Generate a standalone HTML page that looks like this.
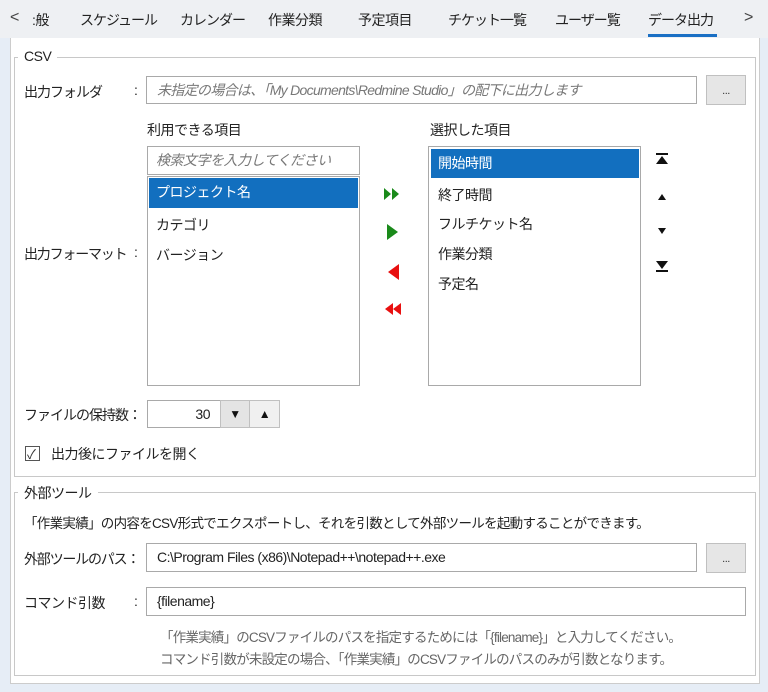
<!DOCTYPE html>
<html><head><meta charset="utf-8"><style>
*{box-sizing:border-box;margin:0;padding:0}
body{width:768px;height:692px;background:#e6edf6;font-family:"Liberation Sans","Noto Sans CJK JP",sans-serif;font-size:14px;color:#222;position:relative;overflow:hidden;letter-spacing:-0.5px}
.a{position:absolute;white-space:nowrap}
.tabs{position:absolute;left:0;top:0;width:768px;height:38px;background:#eef0f3}
.panel{position:absolute;left:10px;top:38px;width:750px;height:646px;background:#fff;border:1px solid #ccc;border-top:none}
.grp{position:absolute;border:1px solid #c8c8c8}
.leg{position:absolute;background:#fff;padding:0 6px;font-size:14px}
.in{position:absolute;border:1px solid #a9a9a9;background:#fff;padding-left:10px;line-height:26px;font-size:14px;white-space:nowrap;overflow:hidden}
.btn{position:absolute;border:1px solid #c0c0c0;background:#e6e6e6;text-align:center;font-size:11px;line-height:30px;color:#333}
.sel{position:absolute;background:#126fbf;color:#fff;padding-left:7px;line-height:29px}
.ph{color:#777;font-style:italic}
.note{color:#666}
</style></head><body>
<div class="tabs">
<span class="a" style="left:10px;top:9px;font-size:16px;color:#444">&lt;</span>
<span class="a" style="left:32px;top:10px">:般</span>
<span class="a" style="left:80px;top:10px;letter-spacing:-1px">スケジュール</span>
<span class="a" style="left:180px;top:10px;letter-spacing:-1px">カレンダー</span>
<span class="a" style="left:268px;top:10px">作業分類</span>
<span class="a" style="left:358px;top:10px">予定項目</span>
<span class="a" style="left:448px;top:10px;letter-spacing:-1px">チケット一覧</span>
<span class="a" style="left:555px;top:10px;letter-spacing:-1px">ユーザー覧</span>
<span class="a" style="left:648px;top:10px;letter-spacing:-1px">データ出力</span>
<div class="a" style="left:648px;top:34px;width:69px;height:3px;background:#1a6fc4"></div>
<span class="a" style="left:744px;top:9px;font-size:16px;color:#444">&gt;</span>
</div>
<div class="panel"></div>

<div class="grp" style="left:14px;top:57px;width:742px;height:420px"></div>
<span class="leg a" style="left:18px;top:48px">CSV</span>
<span class="a" style="left:24px;top:82px;letter-spacing:-1px">出力フォルダ</span><span class="a" style="left:134px;top:82px">:</span>
<div class="in ph" style="left:146px;top:76px;width:551px;height:28px;letter-spacing:-0.7px">未指定の場合は、「My Documents\Redmine Studio」の配下に出力します</div>
<div class="btn" style="left:706px;top:75px;width:40px;height:30px">...</div>

<span class="a" style="left:147px;top:120px">利用できる項目</span>
<span class="a" style="left:430px;top:120px">選択した項目</span>
<div class="in ph" style="left:147px;top:146px;width:213px;height:29px;padding-left:8px">検索文字を入力してください</div>
<div class="in" style="left:147px;top:176px;width:213px;height:210px;padding:0"></div>
<div class="sel" style="left:149px;top:178px;width:209px;height:30px">プロジェクト名</div>
<span class="a" style="left:156px;top:215px">カテゴリ</span>
<span class="a" style="left:156px;top:245px">バージョン</span>

<div class="in" style="left:428px;top:146px;width:213px;height:240px;padding:0"></div>
<div class="sel" style="left:431px;top:149px;width:208px;height:29px">開始時間</div>
<span class="a" style="left:438px;top:185px">終了時間</span>
<span class="a" style="left:438px;top:214px">フルチケット名</span>
<span class="a" style="left:438px;top:244px">作業分類</span>
<span class="a" style="left:438px;top:274px">予定名</span>

<svg class="a" style="left:380px;top:180px" width="30" height="140">
<path d="M4 8 L11 14 L4 20Z M12 8 L19 14 L12 20Z" fill="#1a8a1a"/>
<path d="M7 44 L18 52 L7 60Z" fill="#1a8a1a"/>
<path d="M19 84 L8 92 L19 100Z" fill="#e81010"/>
<path d="M13 123 L5 129 L13 135Z M21 123 L13 129 L21 135Z" fill="#e81010"/>
</svg>
<svg class="a" style="left:650px;top:150px" width="24" height="130">
<path d="M6 3 H18 V5 H6Z M6 14 L12 6 L18 14Z" fill="#111"/>
<path d="M8 50 L12 44 L16 50Z" fill="#111"/>
<path d="M8 78 L12 84 L16 78Z" fill="#111"/>
<path d="M6 111 L12 119 L18 111Z M6 120 H18 V122 H6Z" fill="#111"/>
</svg>
<span class="a" style="left:24px;top:244px;letter-spacing:-1.2px">出力フォーマット</span><span class="a" style="left:134px;top:244px">:</span>

<span class="a" style="left:24px;top:405px;letter-spacing:-1px">ファイルの保持数：</span>
<div class="in" style="left:147px;top:400px;width:74px;height:28px;text-align:right;padding-right:10px">30</div>
<div class="btn" style="left:220px;top:400px;width:30px;height:28px;line-height:26px;font-size:12px;background:#e4e4e4;color:#111">▼</div>
<div class="btn" style="left:249px;top:400px;width:31px;height:28px;line-height:26px;font-size:12px;background:#f0f0f0;color:#111">▲</div>
<div class="a" style="left:25px;top:446px;width:15px;height:15px;border:1px solid #555"></div>
<span class="a" style="left:27px;top:444px;font-size:13px;color:#333">✓</span>
<span class="a" style="left:51px;top:444px">出力後にファイルを開く</span>

<div class="grp" style="left:14px;top:492px;width:742px;height:184px"></div>
<span class="leg a" style="left:18px;top:483px">外部ツール</span>
<span class="a" style="left:24px;top:512px;font-size:13.5px;letter-spacing:-0.7px">「作業実績」の内容をCSV形式でエクスポートし、それを引数として外部ツールを起動することができます。</span>
<span class="a" style="left:24px;top:549px;letter-spacing:-1.2px">外部ツールのパス：</span>
<div class="in" style="left:146px;top:543px;width:551px;height:29px">C:\Program Files (x86)\Notepad++\notepad++.exe</div>
<div class="btn" style="left:706px;top:543px;width:40px;height:30px">...</div>
<span class="a" style="left:24px;top:593px">コマンド引数</span><span class="a" style="left:134px;top:593px">:</span>
<div class="in" style="left:146px;top:587px;width:600px;height:29px">{filename}</div>
<span class="a note" style="left:160px;top:626px;font-size:13.5px;letter-spacing:-0.8px">「作業実績」のCSVファイルのパスを指定するためには「{filename}」と入力してください。</span>
<span class="a note" style="left:160px;top:648px;font-size:13.5px;letter-spacing:-0.8px">コマンド引数が未設定の場合、「作業実績」のCSVファイルのパスのみが引数となります。</span>
</body></html>
